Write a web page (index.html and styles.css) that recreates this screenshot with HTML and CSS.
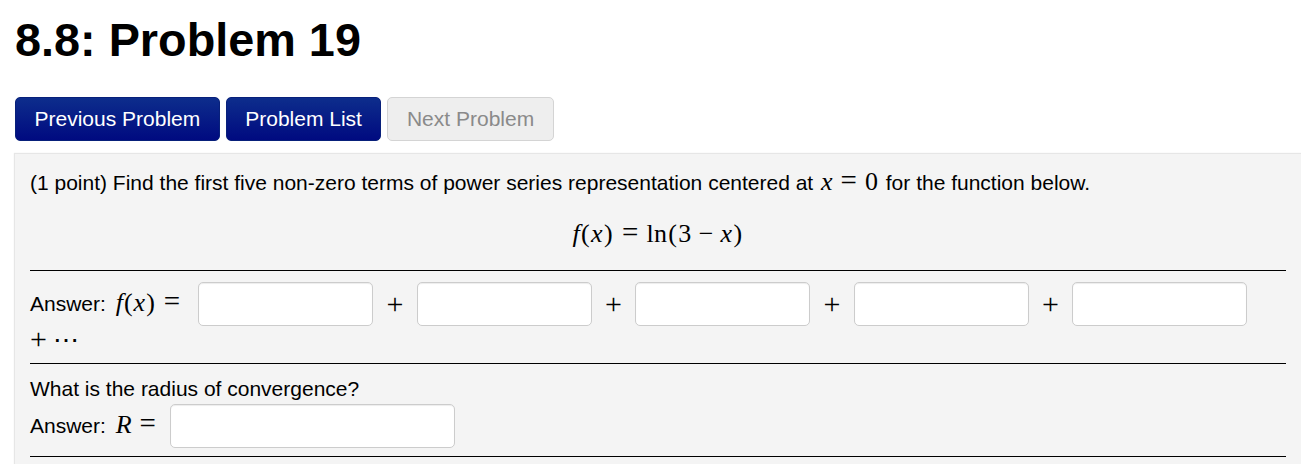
FILE: index.html
```html
<!DOCTYPE html>
<html>
<head>
<meta charset="utf-8">
<link rel="stylesheet" href="styles.css">
</head>
<body>
<div class="page">
  <h1 class="title">8.8: Problem 19</h1>
  <div class="nav">
    <a class="btn btn-primary">Previous Problem</a>
    <a class="btn btn-primary">Problem List</a>
    <span class="btn btn-disabled">Next Problem</span>
  </div>
  <div class="problem">
    <p class="intro">(1 point) Find the first five non-zero terms of power series representation centered at <span class="math"><i>x</i><span class="rel">=</span>0</span> for the function below.</p>
    <div class="display"><span class="math"><i>f</i><span class="p">(</span><i>x</i><span class="p">)</span><span class="rel">=</span>ln<span class="p">(</span>3<span class="bin">−</span><i>x</i><span class="p">)</span></span></div>
    <hr class="rule">
    <div class="answer-row">
      <span class="label">Answer: <span class="math"><i>f</i><span class="p">(</span><i>x</i><span class="p">)</span><span class="rel">=</span></span></span>
      <span class="field"></span>
      <span class="plus math">+</span>
      <span class="field"></span>
      <span class="plus math">+</span>
      <span class="field"></span>
      <span class="plus math">+</span>
      <span class="field"></span>
      <span class="plus math">+</span>
      <span class="field"></span>
    </div>
    <div class="cont"><span class="math"><span class="bigplus">+</span><span class="dots">⋯</span></span></div>
    <hr class="rule">
    <p class="question">What is the radius of convergence?</p>
    <div class="answer-row r-row">
      <span class="label">Answer: <span class="math"><i>R</i><span class="rel">=</span></span></span>
      <span class="field wide"></span>
    </div>
    <hr class="rule last">
  </div>
</div>
</body>
</html>
```
FILE: styles.css
```css
html, body {
  margin: 0;
  padding: 0;
  background: #fff;
}
body {
  font-family: "Liberation Sans", Arial, sans-serif;
  font-size: 21px;
  line-height: 26px;
  color: #000;
}
.page {
  padding: 15px 0 0 15px;
}
.title {
  margin: 0;
  font-size: 46.8px;
  line-height: 51px;
  font-weight: bold;
  color: #000;
}
.nav {
  display: flex;
  gap: 6px;
  margin-top: 31px;
}
.btn {
  display: block;
  height: 42px;
  line-height: 42px;
  padding: 0 18.5px;
  border-radius: 5px;
  border: 1px solid transparent;
  font-size: 21px;
}
.btn-primary {
  color: #fff;
  background: linear-gradient(#0d2d8c, #000a80);
  border-color: #08207a;
}
.btn-disabled {
  color: #8a8a8a;
  background: #eee;
  border-color: #d4d4d4;
}
.problem {
  margin-top: 13px;
  background: #f4f4f4;
  box-shadow: 0 0 1px 1px #e6e6e6;
  padding: 16px 15px 8px 15px;
}
.intro {
  margin: 0;
}
.math {
  font-family: "Liberation Serif", "Times New Roman", serif;
  font-size: 26px;
  line-height: 20px;
  color: #000;
}
.math i {
  font-style: italic;
}
.math .p {
  margin: 0 1px;
}
.intro .math {
  margin: 0 2px;
}
.rel {
  margin: 0 8px;
  font-size: 29px;
}
.bin {
  margin: 0 7px;
}
.display {
  text-align: center;
  margin-top: 25px;
  line-height: 28px;
  letter-spacing: 0.3px;
}
.rule {
  border: 0;
  border-top: 1px solid #000;
  margin: 21px 0 0 0;
  height: 0;
}
.answer-row {
  display: flex;
  align-items: center;
  height: 46px;
  margin-top: 10px;
}
.label {
  white-space: nowrap;
}
.label .math {
  margin-left: 4px;
}
.field {
  display: block;
  width: 173px;
  height: 42px;
  background: #fff;
  border: 1px solid #ccc;
  border-radius: 5px;
  box-shadow: inset 0 1px 1px rgba(0,0,0,0.075);
  flex: none;
}
.answer-row .label {
  margin-right: 10px;
}
.plus {
  width: 43.5px;
  text-align: center;
  flex: none;
  font-size: 30px;
}
.cont {
  line-height: 24px;
  height: 24px;
  padding-top: 2px;
}
.bigplus {
  font-size: 30px;
}
.cont .dots {
  margin-left: 6px;
  letter-spacing: 2px;
}
.cont + .rule {
  margin-top: 10px;
}
.question {
  margin: 12px 0 0 0;
}
.r-row {
  margin-top: 1px;
}
.r-row .label {
  margin-right: 6px;
}
.field.wide {
  width: 283px;
}
.rule.last {
  margin-top: 7px;
}
```
